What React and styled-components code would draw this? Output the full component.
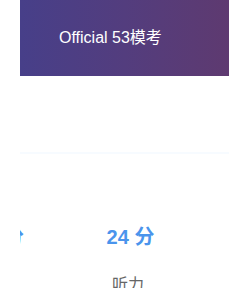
import React from 'react';
import styled, { createGlobalStyle } from 'styled-components';

const Global = createGlobalStyle`
  body {
    margin: 0;
    background: #ffffff;
    font-family: "Liberation Sans", Arial, "Noto Sans CJK SC", sans-serif;
  }
`

const Page = styled.div`
  width: 250px;
  height: 288px;
  overflow: hidden;
  padding: 0 21px 0 20px;
  box-sizing: border-box;
`

const Banner = styled.div`
  height: 76px;
  display: flex;
  align-items: center;
  padding-left: 39px;
  padding-bottom: 4px;
  box-sizing: border-box;
  background: linear-gradient(90deg, #473f89 0%, #533d7e 50%, #5e3a70 100%);
  color: #ffffff;
  font-size: 16px;
`

const Divider = styled.div`
  margin-top: 76px;
  height: 2px;
  background: #f7fbff;
`

const Scores = styled.div`
  overflow: hidden;
  margin-top: 71px;
`

const Track = styled.div`
  display: flex;
  margin-left: -85px;
`

const Item = styled.div`
  flex: 0 0 ${p => p.$w}px;
  display: flex;
  flex-direction: column;
  align-items: center;
`

const Score = styled.div`
  color: #4a94ec;
  font-size: 20px;
  font-weight: bold;
  line-height: 24px;
`

const Label = styled.div`
  margin-top: 26px;
  color: #666666;
  font-size: 16px;
  line-height: 20px;
  margin-left: -5px;
`

const items = [
  { score: '24 分', label: '阅读', w: 130 },
  { score: '24 分', label: '听力', w: 131 },
]

export default function App() {
  return (
    <Page>
      <Global />
      <Banner>Official 53模考</Banner>
      <Divider />
      <Scores>
        <Track>
          {items.map((it, i) => (
            <Item key={i} $w={it.w}>
              <Score>{it.score}</Score>
              <Label>{it.label}</Label>
            </Item>
          ))}
        </Track>
      </Scores>
    </Page>
  );
}
